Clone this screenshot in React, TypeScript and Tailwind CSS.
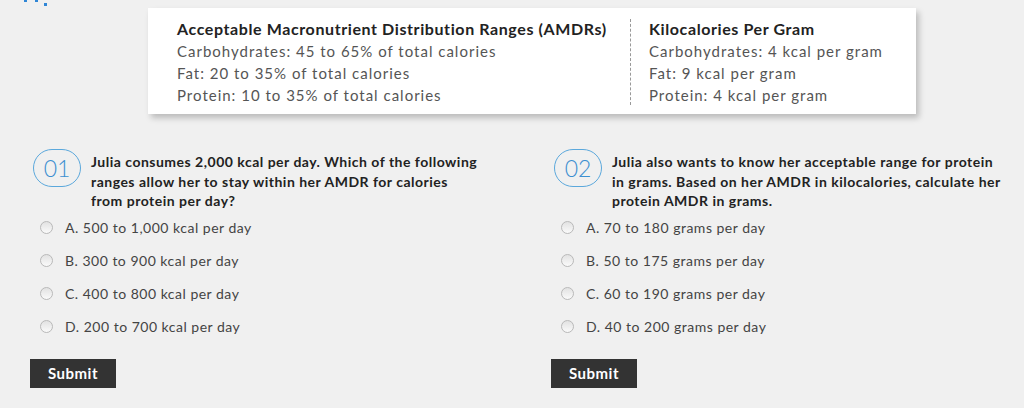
const FONT = "font-['Lato','Noto_Sans',sans-serif]";

type Question = {
  num: string;
  text: string;
  options: string[];
};

const QUESTIONS: Question[] = [
  {
    num: "01",
    text: "Julia consumes 2,000 kcal per day. Which of the following ranges allow her to stay within her AMDR for calories from protein per day?",
    options: [
      "A. 500 to 1,000 kcal per day",
      "B. 300 to 900 kcal per day",
      "C. 400 to 800 kcal per day",
      "D. 200 to 700 kcal per day",
    ],
  },
  {
    num: "02",
    text: "Julia also wants to know her acceptable range for protein in grams. Based on her AMDR in kilocalories, calculate her protein AMDR in grams.",
    options: [
      "A. 70 to 180 grams per day",
      "B. 50 to 175 grams per day",
      "C. 60 to 190 grams per day",
      "D. 40 to 200 grams per day",
    ],
  },
];

const ITEM = "text-[15px] leading-[22px] tracking-[1px] text-[#555]";
const HEAD = "text-[16px] font-bold leading-[22px] tracking-[0.6px] text-[#222]";

function Radio() {
  return (
    <span className="h-[13px] w-[13px] shrink-0 rounded-full border border-[#b9b9b9] bg-gradient-to-b from-[#e2e2e2] to-[#fafafa]" />
  );
}

function QuestionBlock({ q }: { q: Question }) {
  return (
    <div className="flex flex-col">
      <div className="flex items-start gap-[10px]">
        <div className="mt-[-3px] flex h-[38px] w-[48px] shrink-0 items-center justify-center rounded-full border-[1.5px] border-[#5ba8dc] text-[23px] font-light leading-none text-[#3c8fd0]">
          {q.num}
        </div>
        <p className="w-[390px] text-[14px] font-bold leading-[19.5px] tracking-[0.5px] text-[#222]">
          {q.text}
        </p>
      </div>
      <ul className="mt-[7px] flex flex-col gap-[13px] pl-[7px]">
        {q.options.map((o) => (
          <li key={o} className="flex h-[20px] items-center gap-[12px]">
            <Radio />
            <span className="text-[14px] tracking-[0.5px] text-[#444]">{o}</span>
          </li>
        ))}
      </ul>
      <button className="ml-[-3px] mt-[22px] h-[29px] w-[86px] bg-[#333] text-[15px] font-bold tracking-[0.5px] text-white">
        Submit
      </button>
    </div>
  );
}

export default function App() {
  return (
    <div className={`${FONT} relative h-[408px] w-[1024px] overflow-hidden bg-[#f0f0f0]`}>
      {/* clipped dots from whatever sits above the fold */}
      <svg className="absolute left-0 top-0" width="60" height="10" aria-hidden>
        <rect x="24" y="0" width="3" height="2" fill="#2f86d6" />
        <rect x="35" y="0" width="3" height="2" fill="#2f86d6" />
        <rect x="44" y="3" width="3" height="3" fill="#2f86d6" />
      </svg>

      <div className="pt-[8px] pl-[148px]">
        <div className="flex w-[768px] bg-white pt-[10px] pb-[8px] shadow-[3px_4px_6px_rgba(0,0,0,0.22)]">
          <div className="w-[482px] pl-[29px]">
            <h2 className={HEAD}>Acceptable Macronutrient Distribution Ranges (AMDRs)</h2>
            <p className={ITEM}>Carbohydrates: 45 to 65% of total calories</p>
            <p className={ITEM}>Fat: 20 to 35% of total calories</p>
            <p className={ITEM}>Protein: 10 to 35% of total calories</p>
          </div>
          <div className="my-[1px] border-l border-dashed border-[#999]" />
          <div className="pl-[18px]">
            <h2 className={HEAD}>Kilocalories Per Gram</h2>
            <p className={ITEM}>Carbohydrates: 4 kcal per gram</p>
            <p className={ITEM}>Fat: 9 kcal per gram</p>
            <p className={ITEM}>Protein: 4 kcal per gram</p>
          </div>
        </div>
      </div>

      <div className="mt-[38px] grid grid-cols-[521px_1fr] pl-[33px]">
        {QUESTIONS.map((q) => (
          <QuestionBlock key={q.num} q={q} />
        ))}
      </div>
    </div>
  );
}
